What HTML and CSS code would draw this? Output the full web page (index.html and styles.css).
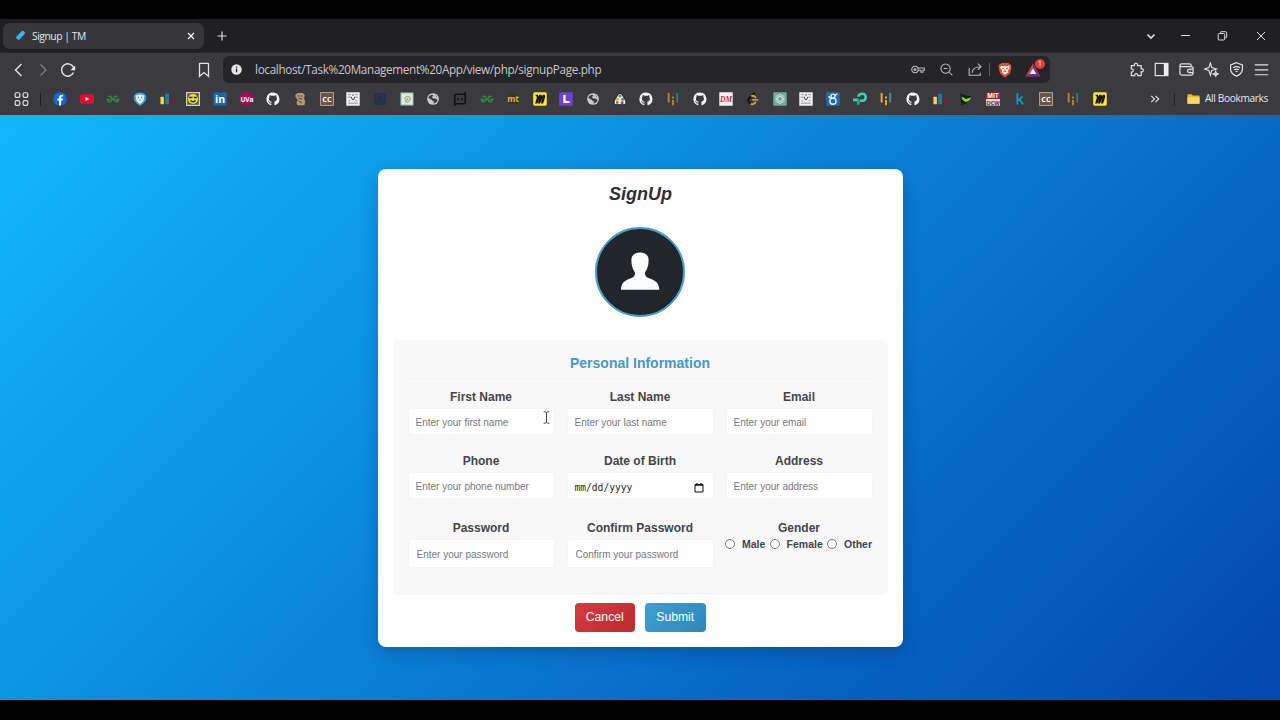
FILE: index.html
```html
<!DOCTYPE html>
<html lang="en">
<head>
<meta charset="utf-8">
<title>Signup | TM</title>
<link rel="stylesheet" href="styles.css">
</head>
<body>
<svg class="defs" width="0" height="0">
  <symbol id="gh" viewBox="0 0 16 16"><path fill="#f5f5f7" d="M8 .5a7.500 7.500 0 0 0-2.400 14.600c.4.1.5-.2.5-.4v-1.500c-2 .4-2.500-.9-2.500-.9-.4-.9-.9-1.100-.9-1.100-.7-.5 0-.5 0-.5.8 0 1.200.8 1.200.8.7 1.200 1.800.9 2.200.7 0-.5.3-.9.5-1.100-1.700-.2-3.300-.8-3.300-3.600 0-.8.3-1.400.7-1.900 0-.2-.3-1 .1-1.900 0 0 .6-.2 2 .7a7 7 0 0 1 3.600 0c1.400-.9 2-.7 2-.7.4.9.1 1.700.1 1.900.4.5.7 1.100.7 1.900 0 2.800-1.700 3.400-3.300 3.600.3.200.5.700.5 1.400v2.200c0 .2.1.500.5.400A7.500 7.500 0 0 0 8 .5z"/></symbol>
  <symbol id="gfg" viewBox="0 0 16 16"><path fill="none" stroke="#2f8d46" stroke-width="1.500" d="M2.500 5.300C5 4 7 5.500 6.800 8.300 6.500 12 2 12 1.400 8.600H5M13.500 5.300C11 4 9 5.500 9.200 8.300 9.500 12 14 12 14.600 8.600H11M6.800 8.600h2.400"/></symbol>
  <symbol id="globe" viewBox="0 0 16 16"><circle cx="8" cy="8" r="6.700" fill="#c9cacd"/><path fill="#3b3b3f" d="M2.500 6.500l2-2.500 2.500-.8 1.500.800L6.500 6l2 1.500 3 .2 1.500 1.300-.5 2-2 1.500-2.500.5 1.500-2-2-1-2-1.700zM10.500 3.500l2 1.500-1 .800z"/></symbol>
  <symbol id="bars" viewBox="0 0 16 16"><rect x=".5" y="5.500" width="4" height="8.500" rx=".6" fill="#f2cf5b"/><rect x="6" y="2" width="4.200" height="12" rx=".6" fill="#1d7fa8"/><rect x="11.300" y="6.500" width="4" height="7.500" rx="1" fill="#7c1a36"/></symbol>
  <symbol id="poles" viewBox="0 0 16 16"><path stroke="#efb02d" stroke-width="2.200" d="M3 1v11M8 5v2.500M8 9v6"/><path stroke="#4590a8" stroke-width="2.200" d="M12.800 1v11"/></symbol>
  <symbol id="miro" viewBox="0 0 16 16"><rect x=".2" y=".2" width="15.600" height="15.600" rx="2" fill="#fbe04a"/><path d="M2.500 3h3l1 2L7 3h2.500l1 2L11 3h2.500l.5 2.500L11.500 13H9l1.700-6L8 13H5.500l1.800-6L5 13H2.500l2-7z" fill="#17130a"/></symbol>
  <symbol id="doc" viewBox="0 0 16 16"><rect x=".3" y=".3" width="15.400" height="15.400" fill="#eeeeef"/><path d="M2.500 3h3m5 0h3M2 6h3.500m5 0h3M2.500 12.800h11M3 10h2m6 0h2" stroke="#8a8a8e"/><path d="M6 5.500l1 3h2l1-3M8 2.500v2" stroke="#343438" fill="none"/></symbol>
</svg>

<div class="browser">
  <header class="tabstrip">
    <div class="tab">
      <svg class="favicon" viewBox="0 0 12 12"><path fill="#3fb4e4" d="M7.500 1.200q1-.8 1.900 0l1.300 1.200q.8.9 0 1.800L5 10.300q-1 .9-1.900 0L1.500 8.900q-.8-.9 0-1.800z"/><path fill="#14628f" d="M.8 5.500l2.200-1.800.5 2.300-2 2z"/></svg>
      <span class="tab-title">Signup | TM</span>
      <svg class="x-icon" viewBox="0 0 8 8"><path d="M1 1l6 6M7 1L1 7"/></svg>
    </div>
    <svg class="plus" viewBox="0 0 10 10"><path d="M5 .5v9M.5 5h9"/></svg>
    <div class="window-buttons">
      <svg viewBox="0 0 12 12"><path stroke-width="1.700" d="M2.500 4.500L6 8l3.500-3.500"/></svg>
      <svg viewBox="0 0 12 12"><path d="M1 5.500h9"/></svg>
      <svg viewBox="0 0 12 12"><rect x="1.200" y="3.500" width="6.500" height="6.500" rx="1"/><path d="M3.500 3.300V2.500q0-.8.8-.8H8.500q1.200 0 1.200 1.200v4q0 .9-.9.900h-.8"/></svg>
      <svg viewBox="0 0 12 12"><path d="M2 2l8 8M10 2l-8 8"/></svg>
    </div>
  </header>

  <nav class="toolbar">
    <svg class="nav-icon back" viewBox="0 0 16 16"><path d="M10.500 2L4.500 8l6 6"/></svg>
    <svg class="nav-icon forward" viewBox="0 0 16 16"><path d="M5.500 2.500L11 8l-5.500 5.500"/></svg>
    <svg class="nav-icon reload" viewBox="0 0 16 16"><path d="M13.500 10.500a6.200 6.200 0 1 1 .2-4.500"/><path fill="#eee" stroke="none" d="M15.200 3.500v4.700h-4.700z"/></svg>
    <svg class="nav-icon mark" viewBox="0 0 16 16"><path d="M3.500 2q0-.6.600-.6h7.800q.6 0 .6.600v12.300L8 10.500l-4.500 3.800z"/></svg>
    <div class="address">
      <svg class="info" viewBox="0 0 12 12"><circle cx="6" cy="6" r="5.700" fill="#e4e4e7"/><path d="M6 5v4M6 2.700v1.400" stroke="#29292c" stroke-width="1.400"/></svg>
      <span class="url">localhost/Task%20Management%20App/view/php/signupPage.php</span>
      <svg class="a-icon key" viewBox="0 0 14 14"><circle cx="4" cy="6.500" r="3.200"/><circle cx="4" cy="6.500" r="1"/><path d="M7 5h6.300v2.300h-1.300v2h-2v-2H7"/></svg>
      <svg class="a-icon zoom" viewBox="0 0 14 14"><circle cx="6" cy="6" r="5"/><path d="M9.700 9.700L13.300 13.300M4 6h4"/></svg>
      <svg class="a-icon share" viewBox="0 0 14 14"><path d="M1.200 5v7.300h11V9.800M4.200 9.700C4.500 5.500 7 3.700 12.800 3.700M9.800.700l3.200 3-3.200 3.200"/></svg>
      <i class="a-sep"></i>
      <svg class="brave" viewBox="0 0 14 16"><path fill="#e5502d" d="M3.500 1h7l1.300 1.400h1.200L13.500 5l-1.500 6.500L7 15.500 2 11.500.5 5 1 2.400h1.200z"/><path fill="#fff" d="M3 3.800l4 .7 4-.7.8 1.700L9.800 9l.4 1.300L7 12.800l-3.200-2.500L4.200 9l-2-3.500z"/><path stroke="#e5502d" fill="none" d="M4 6.200l2 .6M10 6.200l-2 .6M7 7v2.500M5.300 10l1.700-.8 1.700.8"/></svg>
      <span class="bat"><svg viewBox="0 0 16 16"><path fill="#d7453c" d="M8 1.500L.3 14.800 4.500 12 8 7z"/><path fill="#6f2ca5" d="M.3 14.800h15.400L11.500 12h-7z"/><path fill="#9b2b6d" d="M8 1.500l7.700 13.300-4.200-2.800L8 7z"/><path fill="#fff" d="M8 6.500l3.300 5.500H4.700z"/></svg><b>1</b></span>
    </div>
    <div class="tools">
      <svg viewBox="0 0 16 16"><path d="M2.500 3.800h3.200C5 .5 9.800.5 9.100 3.800h3.900v3.400c3-.7 3 4 0 3.300v4H9.300c.6-2.900-3.900-2.900-3.300 0H2.500v-3.800c2.700.5 2.700-3.900 0-3.400z"/></svg>
      <svg viewBox="0 0 16 16"><rect x="1.300" y="1.500" width="13.400" height="13"/><path fill="#eee" stroke="none" d="M10.500 1.500h4.700v13h-4.700z"/></svg>
      <svg viewBox="0 0 16 16"><path d="M1 3.800V12q0 2 2 2h10q2 0 2-2V6.500Q15 5 13.500 5H2.500Q1 4.800 1 3.500T2.500 2H11q2 0 2 1.700V5M15 7.500h-4q-2 .1-2 1.900t2 1.900h4M11.500 9.400h.8"/></svg>
      <svg viewBox="0 0 16 16"><path d="M6.800 1l1.500 5 4.800 1.500L8.300 9 6.800 14 5.200 9 .5 7.500 5.200 6zM12.500 10l.7 2 2 .7-2 .7-.7 2-.7-2-2-.7 2-.7z"/></svg>
      <svg viewBox="0 0 16 16"><path d="M8 .8l6.300 2.300v5q-.5 4.500-6.300 7-5.800-2.500-6.300-7v-5z"/><path d="M4.300 6.200q3.700-2.500 7.400 0M5.500 8.300q2.500-1.600 5 0M7 10.400q1-.6 2 0"/></svg>
      <svg viewBox="0 0 16 16"><path d="M.8 3h14.400M.8 8.300h14.400M.8 13.600h14.400"/></svg>
    </div>
  </nav>

  <div class="bookmarks">
    <svg class="apps" viewBox="0 0 16 16"><rect x="1.200" y=".8" width="5" height="5" rx="1.500"/><rect x="9.700" y=".8" width="5" height="5" rx="1.500"/><rect x="1.200" y="9.300" width="5" height="5" rx="1.500"/><rect x="9.700" y="9.300" width="5" height="5" rx="1.500"/></svg>
    <i class="b-sep"></i>
    <div class="favs">
      <svg viewBox="0 0 16 16"><circle cx="8" cy="8" r="7.800" fill="#1466d8"/><path fill="#fff" d="M7 15.300V9.700H5V7.400h2V6q0-3 3-3h1.400v2.100h-1.200q-1 0-1 1v1.300h2.200l-.4 2.300H9.200v5.600z"/></svg>
      <svg viewBox="0 0 16 16"><rect x="0" y="2.500" width="16" height="11" rx="3" fill="#e80b30"/><path fill="#fff" d="M6.300 5.600L10.500 8l-4.200 2.400z"/></svg>
      <svg><use href="#gfg"/></svg>
      <svg viewBox="0 0 16 16"><path fill="#3b9fcb" d="M1 4l3-3 4-.5 4 .5 3 3v5l-3 4-4 3-4-3-3-4z"/><path fill="#e9eff1" d="M3 4l5-1.500L13 4l-1 6-4 4-4-4z"/><path fill="#394a55" d="M5.500 5.500h1v1.500h-1zM9.500 5.500h1v1.500h-1zM7.500 8.500h1v1.500h-1z"/></svg>
      <svg><use href="#bars"/></svg>
      <svg viewBox="0 0 16 16"><rect x=".7" y=".7" width="14.600" height="14.600" fill="#5c5c32" stroke="#d2d2cd" stroke-width="1.400"/><circle cx="8" cy="8" r="5.700" fill="#e7e32e"/><path stroke="#22220e" fill="none" stroke-width="1.600" d="M3.500 6.200h3.700M8.800 6.200h3.700M5 9.800q3 2.700 6 0"/></svg>
      <svg viewBox="0 0 16 16"><rect x=".5" y=".5" width="15" height="15" rx="1" fill="#1769b5"/><text x="8" y="12.300" font-size="12" font-weight="700" fill="#fff" text-anchor="middle">in</text></svg>
      <svg viewBox="0 0 16 16"><circle cx="8" cy="8" r="8" fill="#a6075b"/><text x="8" y="11" font-size="7.500" font-weight="700" fill="#fff" text-anchor="middle">UVa</text></svg>
      <svg><use href="#gh"/></svg>
      <svg viewBox="0 0 16 16"><path fill="#b39b72" d="M2.500 3l3-2h6l2 3-1 3 1.500 4-1 4H5l-1-3 1.500-3L3 6z"/><path stroke="#4a3929" stroke-width="1.200" fill="none" d="M5 4.500h2m1.500 0h2M6.500 7.500l4 .5M7 10.500l3 2"/></svg>
      <svg viewBox="0 0 16 16"><rect x=".7" y=".7" width="14.600" height="14.600" fill="#6b5344" stroke="#c3ae9b"/><text x="8" y="11" font-size="8.500" font-weight="700" fill="#fff" text-anchor="middle">CC</text></svg>
      <svg><use href="#doc"/></svg>
      <svg viewBox="0 0 16 16"><rect x="1" y="1" width="14" height="14" rx="2" fill="#26304a"/><path stroke="#2e3a56" fill="none" d="M4.500 4h5l2 2v6h-7z"/></svg>
      <svg viewBox="0 0 16 16"><rect x="1" y="1" width="14" height="14" fill="#e4e8d1" stroke="#77a9ae"/><path stroke="#61927e" fill="none" d="M8 8q1.500-1.500 1 .8-2 2-3.300 0-.7-3.500 2.700-3.800 4 .5 3.300 4-2.500 4-6.200 2.300"/></svg>
      <svg><use href="#globe"/></svg>
      <svg viewBox="0 0 16 16"><path stroke="#111113" fill="none" stroke-width="1.800" d="M2 4.500q0-2 2-2h8.500L14 1v10.500q0 2-2 2H3.500L2 15z"/><path stroke="#111113" stroke-width="1.500" d="M5.800 7v2.300M10 7v2.300"/></svg>
      <svg><use href="#gfg"/></svg>
      <svg viewBox="0 0 16 16"><circle cx="8" cy="8" r="7" fill="#39352b"/><text x="8" y="11" font-size="9.500" font-weight="700" fill="#e0b52d" text-anchor="middle">mt</text></svg>
      <svg><use href="#miro"/></svg>
      <svg viewBox="0 0 16 16"><rect x=".3" y=".3" width="15.400" height="15.400" fill="#7240d4"/><path fill="#fff" d="M5 3.500h2.500v6.800H12v2.200H5z"/></svg>
      <svg><use href="#globe"/></svg>
      <svg viewBox="0 0 16 16"><path fill="#e9e9e8" stroke="#111" d="M5.300 3.500Q8-.5 10.700 3.500l3.500 6q2 5-2.500 5H4.300q-4.500 0-2.500-5z"/><circle cx="8" cy="4.500" r="1.700" fill="#33a35b"/><circle cx="5" cy="8.500" r="1.600" fill="#e0a22d"/><circle cx="11" cy="8.500" r="1.600" fill="#3a8d5c"/><circle cx="4.800" cy="12" r="1.500" fill="#2c8854"/><circle cx="10.500" cy="12.200" r="1.700" fill="#d72d52"/></svg>
      <svg><use href="#gh"/></svg>
      <svg class="dim"><use href="#poles"/></svg>
      <svg><use href="#gh"/></svg>
      <svg viewBox="0 0 16 16"><rect x=".3" y=".3" width="15.400" height="15.400" fill="#f6eef0"/><text x="8" y="11.300" font-family="Liberation Serif" font-size="8.500" font-style="italic" font-weight="700" fill="#bf243f" text-anchor="middle">DM</text></svg>
      <svg viewBox="0 0 16 16"><path stroke="#111" fill="none" stroke-width="2.200" d="M10 .8L2.800 8q-1.200 1.400 0 2.700l2.800 2.800"/><path stroke="#e79c2a" fill="none" stroke-width="2.200" d="M5.300 13.300q1.700 1.500 3.600.2l2.600-2.200M6 5q2-1.500 3.500 0l2 1.700"/><path stroke="#aaa" stroke-width="1.700" d="M7 9h7"/></svg>
      <svg viewBox="0 0 16 16"><rect x=".3" y=".3" width="15.400" height="15.400" rx="1.500" fill="#74aa96"/><g fill="none" stroke="#cce4db" stroke-width=".9"><ellipse cx="8" cy="8" rx="2.700" ry="5.300"/><ellipse cx="8" cy="8" rx="2.700" ry="5.300" transform="rotate(60 8 8)"/><ellipse cx="8" cy="8" rx="2.700" ry="5.300" transform="rotate(120 8 8)"/></g></svg>
      <svg><use href="#doc"/></svg>
      <svg viewBox="0 0 16 16"><rect x=".3" y=".3" width="15.400" height="15.400" fill="#1f6fa7"/><g fill="none" stroke="#e8f5fa" stroke-width="1.500"><circle cx="8" cy="10.500" r="3.500"/><circle cx="8" cy="4.800" r="2.300"/><path d="M10 4l3-2M3.500 4.500q0 3 3 2.500"/></g></svg>
      <svg viewBox="0 0 16 16"><path stroke="#43cbb4" fill="none" stroke-width="3" d="M6 5.500q.8-3.500 4.500-3.500 4 0 4 4t-4 4H8M0 9h6"/><path stroke="#2ba890" stroke-width="3" d="M6 8v6.500"/></svg>
      <svg><use href="#poles"/></svg>
      <svg><use href="#gh"/></svg>
      <svg><use href="#bars"/></svg>
      <svg viewBox="0 0 16 16"><path fill="#152116" d="M1.500 1.500l5 2 8 1.500-6 8-6 2z"/><path fill="#87d52e" d="M3 5l5 3 6-2q-3 6-7 5-4-2-4-6z"/></svg>
      <svg viewBox="0 0 16 16"><rect y=".5" width="16" height="7" fill="#a82335"/><rect y="8" width="16" height="7.500" fill="#d8d8dc"/><text x="8" y="6.700" font-size="7" font-weight="700" fill="#fff" text-anchor="middle">MIT</text><text x="8" y="14.300" font-size="6.500" font-weight="700" fill="#6f2431" text-anchor="middle">OCW</text></svg>
      <svg viewBox="0 0 16 16"><path stroke="#159bb5" stroke-width="2" fill="none" d="M5 1.500v12.700M11 5L5.500 9.700M7.300 8l4.200 6.200"/></svg>
      <svg viewBox="0 0 16 16"><rect x=".7" y=".7" width="14.600" height="14.600" fill="#6b5344" stroke="#c3ae9b"/><text x="8" y="11" font-size="8.500" font-weight="700" fill="#fff" text-anchor="middle">CC</text></svg>
      <svg class="dim"><use href="#poles"/></svg>
      <svg><use href="#miro"/></svg>
    </div>
    <svg class="more" viewBox="0 0 10 10"><path d="M1.300 1.800L4.500 5 1.300 8.200M5.500 1.800L8.700 5 5.500 8.200"/></svg>
    <i class="b-sep right"></i>
    <svg class="folder" viewBox="0 0 14 12"><path fill="#e9b93b" d="M.5 1.500q0-.7.700-.7h3.500l1.500 1.500h6.500q.8 0 .8.800v7.200q0 .9-.9.900H1.400q-.9 0-.9-.9z"/><path fill="#f9d75e" d="M.5 4h13v6.300q0 .9-.9.900H1.400q-.9 0-.9-.9z"/></svg>
    <span class="all">All Bookmarks</span>
  </div>
</div>

<main class="page">
  <form class="card">
    <h1>SignUp</h1>
    <svg class="avatar" viewBox="0 0 90 90"><circle cx="45" cy="45" r="44" fill="#202629" stroke="#489fcb" stroke-width="2"/><path fill="#fafdff" d="M45 25.500c6 0 8.800 3.500 8.600 8-.1 5-1 8-3.300 11.500-.8 2.700.2 4.500 3.200 6 5.300 2.500 10.300 2.700 10.900 11.700H25.900c.6-9 5.300-9.200 10.600-11.700 3-1.500 4-3.300 3.200-6-2.300-3.500-3.200-6.500-3.300-11.500-.2-4.500 2.600-8 8.600-8z"/></svg>
    <section class="panel">
      <h2>Personal Information</h2>
      <div class="grid">
        <label class="field">First Name<input type="text" placeholder="Enter your first name"></label>
        <label class="field">Last Name<input type="text" placeholder="Enter your last name"></label>
        <label class="field">Email<input type="text" placeholder="Enter your email"></label>
        <label class="field">Phone<input type="text" placeholder="Enter your phone number"></label>
        <div class="field">Date of Birth
          <div class="date"><span>mm/dd/yyyy</span><svg viewBox="0 0 10 10"><path d="M1 1.500h8v7.500H1z" fill="none" stroke="#111" stroke-width="1"/><path d="M1 1.300h8v1.500H1zM2.300 0h1.200v2H2.300zM6.500 0h1.200v2H6.500z" fill="#111"/></svg></div>
        </div>
        <label class="field">Address<input type="text" placeholder="Enter your address"></label>
        <label class="field secret">Password<input type="text" placeholder="Enter your password"></label>
        <label class="field secret">Confirm Password<input type="text" placeholder="Confirm your password"></label>
        <div class="field secret">Gender
          <div class="radios">
            <label><input type="radio" name="g">Male</label>
            <label><input type="radio" name="g">Female</label>
            <label><input type="radio" name="g">Other</label>
          </div>
        </div>
      </div>
    </section>
    <div class="actions">
      <button type="button" class="btn cancel">Cancel</button>
      <button type="button" class="btn submit">Submit</button>
    </div>
  </form>
  <svg class="cursor" viewBox="0 0 7 13"><path d="M.7.700q2 0 2.800.8.800-.8 2.800-.8M3.500 1.500v10M.7 12.300q2 0 2.800-.8.800.8 2.800.8" fill="none" stroke="#444"/></svg>
</main>
</body>
</html>
```

FILE: styles.css
```css
* { box-sizing: border-box; }

body {
  margin: 0;
  width: 1280px;
  height: 720px;
  padding: 19px 0 20px;
  overflow: hidden;
  background: #000;
  display: flex;
  flex-direction: column;
  font-family: "Liberation Sans", Arial, sans-serif;
}

.defs { position: absolute; }
svg { display: block; flex: none; }

/* Browser chrome */
.browser {
  height: 96px;
  flex: none;
  background: #3b3b3f;
  font-family: "Open Sans", "Noto Sans", sans-serif;
  color: #e6e6e8;
}

.tabstrip {
  height: 34px;
  display: flex;
  align-items: center;
  background: #1f1f24;
  border-bottom: 1px solid #29292d;
}

.tab {
  width: 201px;
  height: 26px;
  margin-left: 3px;
  padding: 0 9px 0 12px;
  display: flex;
  align-items: center;
  border-radius: 7px;
  background: #37373b;
}

.favicon { width: 11px; height: 11px; }
.tab-title { margin-left: 6px; flex: 1; font-size: 10.3px; line-height: 26px; letter-spacing: -0.45px; }
.x-icon { width: 8px; height: 8px; stroke: #f2f2f4; stroke-width: 1.4; }
.plus { width: 10px; height: 10px; margin-left: 13px; stroke: #dcdcdf; stroke-width: 1.2; }

.window-buttons {
  margin-left: auto;
  padding-right: 13.500px;
  display: flex;
  gap: 25.500px;
}
.window-buttons svg { width: 12px; height: 12px; fill: none; stroke: #dedee1; stroke-width: 1; }
.window-buttons svg:first-child { margin-right: -3px; }

.toolbar {
  height: 33px;
  display: flex;
  align-items: center;
}

.nav-icon { width: 16px; height: 16px; fill: none; stroke: #e4e4e7; stroke-width: 1.4; }
.back { margin-left: 11px; }
.forward { margin-left: 8px; stroke: #7e7e83; }
.reload { margin-left: 9px; }
.mark { margin-left: 120px; stroke-width: 1.3; }

.address {
  width: 827px;
  height: 27px;
  margin-left: 11px;
  padding: 0 7px 0 8px;
  display: flex;
  align-items: center;
  border-radius: 6px;
  background: #252529;
}
.info { width: 11px; height: 11px; }
.url { margin-left: 13px; width: 655px; font-size: 11.7px; line-height: 27px; letter-spacing: -0.31px; color: #c7c7ca; white-space: nowrap; }
.a-icon { width: 13px; height: 13px; fill: none; stroke: #bcbcc0; stroke-width: 1.1; }
.key { width: 14px; height: 14px; margin-left: 1px; }
.zoom { margin-left: 15px; }
.share { width: 14px; height: 14px; margin-left: 15px; }
.a-sep { width: 1px; height: 13px; margin-left: 7px; background: #5b5b60; }
.brave { width: 14px; height: 16px; margin-left: 8px; }
.bat { position: relative; margin-left: 13px; }
.bat svg { width: 16px; height: 16px; }
.bat b {
  position: absolute;
  left: 10px;
  top: -3px;
  width: 10px;
  height: 10px;
  border-radius: 50%;
  background: #e3403a;
  color: #fff;
  font-size: 7px;
  font-weight: 400;
  line-height: 10px;
  text-align: center;
}

.tools { margin-left: auto; padding-right: 11px; display: flex; gap: 10px; }
.tools svg { width: 15px; height: 15px; fill: none; stroke: #e1e1e4; stroke-width: 1.3; }

.bookmarks {
  height: 29px;
  padding-bottom: 3px;
  display: flex;
  align-items: center;
}
.apps { width: 15px; height: 15px; margin-left: 14px; fill: none; stroke: #dddde0; stroke-width: 1.3; }
.b-sep { width: 1px; height: 13px; margin-left: 11px; background: #202024; }
.favs {
  width: 1054px;
  margin-left: 12px;
  display: flex;
  justify-content: space-between;
}
.favs svg { width: 14px; height: 14px; }
.favs .dim { opacity: 0.65; }
.more { width: 10px; height: 10px; margin-left: 43px; fill: none; stroke: #dcdce0; stroke-width: 1.2; }
.b-sep.right { margin-left: 14px; }
.folder { width: 13px; height: 12px; margin-left: 12px; }
.all { margin-left: 5px; font-size: 10.200px; line-height: 14px; margin-top: -2px; letter-spacing: -0.37px; white-space: nowrap; }

/* Signup page */
.page {
  position: relative;
  flex: 1;
  padding-top: 53.500px;
  display: flex;
  justify-content: center;
  align-items: flex-start;
  background: linear-gradient(135deg, #11b8fd 0%, #0346b0 100%);
}

.card {
  width: 525px;
  height: 478.500px;
  padding: 15.500px 15px 14px;
  display: flex;
  flex-direction: column;
  align-items: center;
  border-radius: 8px;
  background: #fff;
  box-shadow: 0 6px 18px rgba(0, 0, 0, 0.2);
}

h1 { margin: 0 -1px 0 0; font-size: 18px; line-height: 21px; font-style: italic; color: #303033; }
.avatar { width: 90px; height: 90px; margin-top: 22px; }

.panel {
  width: 495px;
  height: 255px;
  margin-top: 23px;
  padding: 13px 15px 0;
  flex: none;
  border-radius: 5px;
  background: #f8f8f9;
}
h2 {
  margin: 0;
  height: 26px;
  border-bottom: 1px solid #f4f4f5;
  font-size: 14px;
  line-height: 20px;
  text-align: center;
  color: #4599c6;
}
.grid {
  display: grid;
  grid-template-columns: repeat(3, 147px);
  grid-template-rows: 64px 67px 60px;
  justify-content: space-between;
  padding-top: 11px;
}
.field {
  display: flex;
  flex-direction: column;
  align-items: stretch;
  gap: 3px;
  font-size: 12px;
  font-weight: 700;
  line-height: 15px;
  text-align: center;
  color: #454548;
}
.field > input,
.date {
  width: 100%;
  height: 27px;
  padding: 2px 7px 0;
  border: 1px solid #f5f5f6;
  border-radius: 3px;
  background: #fff;
  font: 400 10px "Liberation Sans", Arial, sans-serif;
}
.field > input::placeholder { color: #77777a; opacity: 1; }
.secret > input { height: 29px; padding: 2px 0 0 8px; }
.date {
  display: flex;
  align-items: center;
  justify-content: space-between;
  padding-right: 9px;
  padding-top: 4px;
  font: 400 9.600px "DejaVu Sans Mono", monospace;
  color: #1f1f21;
}
.date svg { width: 10px; height: 10px; }

.radios { display: flex; justify-content: space-between; margin: -1px .5px 0 -.5px; }
.radios label { display: flex; align-items: center; font-size: 10.500px; line-height: 13px; }
.radios input {
  appearance: none;
  width: 10px;
  height: 10px;
  margin: 0 7px 2px 0;
  border: 1px solid #77777b;
  border-radius: 50%;
  background: #fff;
}

.actions { display: flex; gap: 10px; margin-top: 8px; }
.btn {
  width: 60.500px;
  height: 29px;
  padding: 0 0 1px;
  border: 0;
  border-radius: 4px;
  color: #fff;
  font: 400 12.200px "Liberation Sans", Arial, sans-serif;
}
.cancel { background: linear-gradient(135deg, #d73a40, #b92b31); }
.submit { background: linear-gradient(135deg, #409fd0, #3087b9); }

.cursor { position: absolute; left: 543px; top: 296px; width: 7px; height: 13px; }
```
